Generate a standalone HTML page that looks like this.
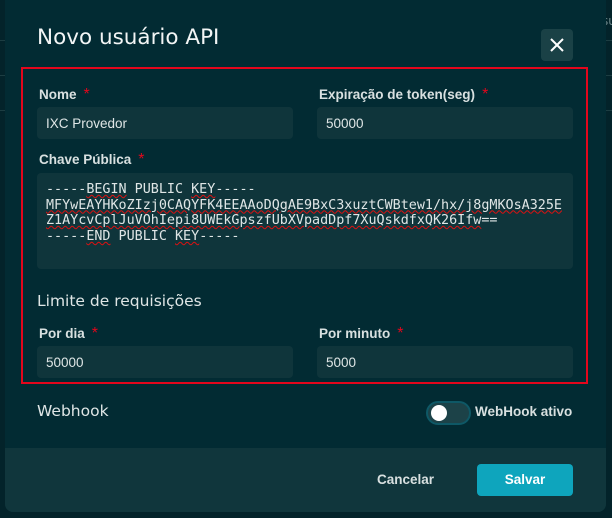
<!DOCTYPE html>
<html><head><meta charset="utf-8"><style>
*{box-sizing:border-box;margin:0;padding:0}
body{width:612px;height:518px;background:#03232a;position:relative;overflow:hidden;font-family:"DejaVu Sans","Liberation Sans",sans-serif;color:#e4eaea}
.bgl{position:absolute;left:0;width:612px;height:1px;background:#1c3d42}
.modal{position:absolute;left:5px;top:-10px;width:601px;height:522px;background:#022b33;border-radius:8px;overflow:hidden}
.abs{position:absolute}
h1{position:absolute;left:32px;top:35px;font-size:21.5px;font-weight:500;color:#f2f5f5}
.close{left:536px;top:39px;width:32px;height:32px;background:#1a4146;border-radius:4px}
.red{left:16px;top:77px;width:567px;height:317px;border:2px solid #e3061c}
.lbl{font-family:"Liberation Sans",sans-serif;font-size:13.5px;font-weight:bold;color:#d8e0e0}
.lbl b{color:#e3061c;margin-left:7px;font-size:16px;font-weight:normal}
.inp{background:#0f353b;border-radius:4px;height:32px;font-family:"Liberation Sans",sans-serif;font-size:13.5px;color:#dfe6e6;padding:9px 9px}
.ta{background:#0f353b;border-radius:4px;font-family:"DejaVu Sans Mono","Liberation Mono",monospace;font-size:13.4px;line-height:15.6px;color:#dfe6e6;padding:9px 9px;white-space:pre}
.ta u{text-decoration:underline wavy #d11;text-decoration-thickness:1px}
.foot{left:0;top:458px;width:601px;height:64px;background:#10363c}
</style></head><body>
<div class="bgl" style="top:40px"></div>
<div class="bgl" style="top:75px"></div>
<div class="bgl" style="top:110px"></div>
<div class="abs" style="left:602px;top:14px;font-size:12px;color:#6f8a8d">su</div>
<div class="modal">
<h1>Novo usuário API</h1>
<div class="abs close"><svg width="32" height="32"><path d="M10 10L22 22M22 10L10 22" stroke="#fff" stroke-width="2"/></svg></div>
<div class="abs red"></div>
<div class="abs lbl" style="left:34px;top:96px">Nome<b>*</b></div>
<div class="abs lbl" style="left:314px;top:96px">Expiração de token(seg)<b>*</b></div>
<div class="abs inp" style="left:32px;top:117px;width:256px">IXC Provedor</div>
<div class="abs inp" style="left:312px;top:117px;width:256px">50000</div>
<div class="abs lbl" style="left:34px;top:161px">Chave Pública<b>*</b></div>
<div class="abs ta" style="left:32px;top:183px;width:536px;height:96px">-----<u>BEGIN</u> PUBLIC <u>KEY</u>-----
<u>MFYwEAYHKoZIzj0CAQYFK4EEAAoDQgAE9BxC3xuztCWBtew1/hx/j8gMKOsA325E</u>
<u>Z1AYcvCplJuVOhIepi8UWEkGpszfUbXVpadDpf7XuQskdfxQK26Ifw</u>==
-----<u>END</u> PUBLIC <u>KEY</u>-----</div>
<div class="abs" style="left:32px;top:302px;font-size:15.5px;color:#dfe6e6">Limite de requisições</div>
<div class="abs lbl" style="left:34px;top:335px">Por dia<b>*</b></div>
<div class="abs lbl" style="left:314px;top:335px">Por minuto<b>*</b></div>
<div class="abs inp" style="left:32px;top:356px;width:256px">50000</div>
<div class="abs inp" style="left:312px;top:356px;width:256px">5000</div>
<div class="abs" style="left:32px;top:412px;font-size:15.5px;color:#dfe6e6">Webhook</div>
<div class="abs" style="left:421px;top:411px;width:45px;height:24px;border-radius:12px;background:#1c4248;border:2px solid #0e5866"></div>
<div class="abs" style="left:426px;top:415px;width:16px;height:16px;border-radius:8px;background:#fff"></div>
<div class="abs lbl" style="left:470px;top:414px">WebHook ativo</div>
<div class="abs foot"></div>
<div class="abs" style="left:372px;top:482px;font-family:'Liberation Sans',sans-serif;font-weight:bold;font-size:13.5px;color:#d8e0e0">Cancelar</div>
<div class="abs" style="left:472px;top:474px;width:96px;height:32px;background:#0ea5bd;border-radius:4px;text-align:center;line-height:32px;font-family:'Liberation Sans',sans-serif;font-weight:bold;font-size:13.5px;color:#fff">Salvar</div>
</div>
</body></html>
